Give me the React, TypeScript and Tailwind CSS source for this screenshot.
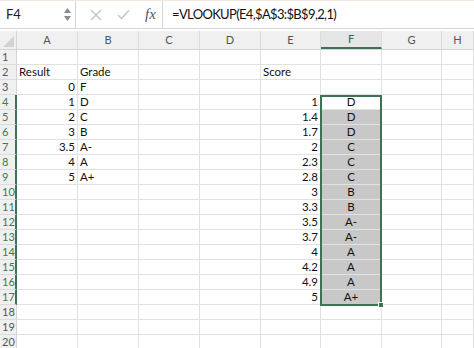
import React from "react";

const cols = ["A", "B", "C", "D", "E", "F", "G", "H"];
const colW = ["w-[61px]", "w-[61px]", "w-[61px]", "w-[61px]", "w-[60px]", "w-[61px]", "w-[60px]", "flex-1"];

type Cell = { t: string; align?: "l" | "r" | "c" };

// row index -> column index -> cell
const data: Record<number, Record<number, Cell>> = {
  2: { 0: { t: "Result" }, 1: { t: "Grade" }, 4: { t: "Score" } },
  3: { 0: { t: "0", align: "r" }, 1: { t: "F" } },
  4: { 0: { t: "1", align: "r" }, 1: { t: "D" }, 4: { t: "1", align: "r" }, 5: { t: "D", align: "c" } },
  5: { 0: { t: "2", align: "r" }, 1: { t: "C" }, 4: { t: "1.4", align: "r" }, 5: { t: "D", align: "c" } },
  6: { 0: { t: "3", align: "r" }, 1: { t: "B" }, 4: { t: "1.7", align: "r" }, 5: { t: "D", align: "c" } },
  7: { 0: { t: "3.5", align: "r" }, 1: { t: "A-" }, 4: { t: "2", align: "r" }, 5: { t: "C", align: "c" } },
  8: { 0: { t: "4", align: "r" }, 1: { t: "A" }, 4: { t: "2.3", align: "r" }, 5: { t: "C", align: "c" } },
  9: { 0: { t: "5", align: "r" }, 1: { t: "A+" }, 4: { t: "2.8", align: "r" }, 5: { t: "C", align: "c" } },
  10: { 4: { t: "3", align: "r" }, 5: { t: "B", align: "c" } },
  11: { 4: { t: "3.3", align: "r" }, 5: { t: "B", align: "c" } },
  12: { 4: { t: "3.5", align: "r" }, 5: { t: "A-", align: "c" } },
  13: { 4: { t: "3.7", align: "r" }, 5: { t: "A-", align: "c" } },
  14: { 4: { t: "4", align: "r" }, 5: { t: "A", align: "c" } },
  15: { 4: { t: "4.2", align: "r" }, 5: { t: "A", align: "c" } },
  16: { 4: { t: "4.9", align: "r" }, 5: { t: "A", align: "c" } },
  17: { 4: { t: "5", align: "r" }, 5: { t: "A+", align: "c" } },
};

const rows = Array.from({ length: 20 }, (_, i) => i + 1);

const FormulaBar = () => (
  <div className="h-[31px] bg-white border-t border-[#efe9dc]">
    <div className="h-[28px] flex items-center border-b border-[#d6d6d6]">
      <div className="w-[76px] h-full flex items-center justify-between pl-[6px] pr-[4px] border-r border-[#d6d6d6]">
        <span className="text-[13px] text-[#222]">F4</span>
        <div className="flex flex-col items-center gap-[3px]">
          <svg width="7" height="5" viewBox="0 0 7 5"><path d="M3.5 0 L7 5 L0 5 Z" fill="#8a8a8a" /></svg>
          <svg width="7" height="5" viewBox="0 0 7 5"><path d="M0 0 L7 0 L3.5 5 Z" fill="#8a8a8a" /></svg>
        </div>
      </div>
      <div className="w-[87px] h-full flex items-center pl-[14px] gap-[15px] border-r border-[#d6d6d6]">
        <svg width="12" height="12" viewBox="0 0 12 12">
          <path d="M1 1 L11 11 M11 1 L1 11" stroke="#c4c4c4" strokeWidth="1.4" />
        </svg>
        <svg width="13" height="11" viewBox="0 0 13 11">
          <path d="M1 6 L4.5 9.5 L12 1.5" stroke="#c4c4c4" strokeWidth="1.4" fill="none" />
        </svg>
        <span className="text-[15px] italic text-[#555] font-['Liberation_Serif',serif]">fx</span>
      </div>
      <span className="pl-[9px] text-[13px] text-[#111] tracking-[-0.65px]">=VLOOKUP(E4,$A$3:$B$9,2,1)</span>
    </div>
  </div>
);

const App = () => {
  return (
    <div className="w-[474px] h-[348px] overflow-hidden bg-white font-['Lato',sans-serif]">
      <FormulaBar />
      <div className="relative">
        {/* column headers */}
        <div className="flex h-[19px] bg-[#f0f0f0] border-b border-[#d4d4d4]">
          <div className="w-[17px] h-full border-r border-[#d4d4d4] relative">
            <svg className="absolute right-[2px] bottom-[2px]" width="11" height="11" viewBox="0 0 11 11">
              <path d="M11 0 L11 11 L0 11 Z" fill="#d2d2d2" />
            </svg>
          </div>
          {cols.map((c, i) => (
            <div
              key={c}
              className={`${colW[i]} h-full flex items-center justify-center text-[11px] border-r border-[#dcdcdc] ${
                c === "F" ? "text-[#2d6b45] bg-[#e6e6e6] border-b-2 border-b-[#3d7354]" : "text-[#555]"
              }`}
            >
              {c}
            </div>
          ))}
        </div>
        {rows.map((r) => {
          const sel = r >= 4 && r <= 17;
          return (
            <div key={r} className="flex h-[15px]">
              <div
                className={`w-[17px] h-full flex items-center pl-[2px] text-[11px] bg-[#f0f0f0] border-b border-[#dcdcdc] ${
                  sel ? "text-[#3b7a52] border-r-2 border-r-[#3d7354]" : "text-[#555] border-r border-r-[#d4d4d4]"
                }`}
              >
                {r}
              </div>
              {cols.map((c, i) => {
                const cell = data[r]?.[i];
                const gray = i === 5 && r >= 5 && r <= 17;
                return (
                  <div
                    key={c}
                    className={`${colW[i]} h-full flex items-center px-[2px] text-[11.5px] text-[#111] border-r border-b ${
                      gray ? "bg-[#c8c8c8] border-[#e2e2e2]" : "border-[#e1e1e1]"
                    } ${cell?.align === "r" ? "justify-end" : cell?.align === "c" ? "justify-center" : "justify-start"}`}
                  >
                    {cell?.t}
                  </div>
                );
              })}
            </div>
          );
        })}
        {/* selection outline over F4:F17 */}
        <div className="absolute left-[320px] top-[64px] w-[62px] h-[211px] border-2 border-[#3d7354] pointer-events-none">
          <div className="absolute -right-[4px] -bottom-[4px] w-[6px] h-[6px] bg-[#3d7354] border border-white" />
        </div>
      </div>
    </div>
  );
};

export default App;
